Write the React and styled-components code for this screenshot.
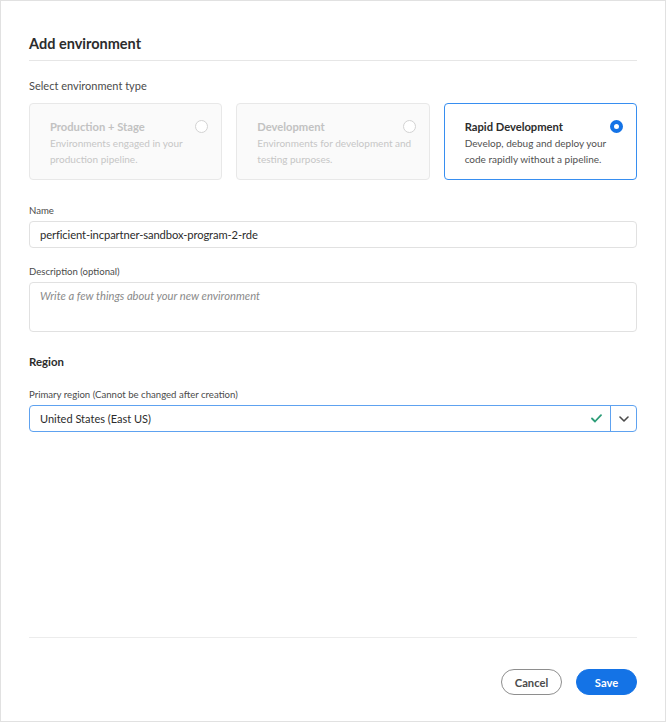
import React from 'react';
import styled, { createGlobalStyle } from 'styled-components';

const GlobalStyle = createGlobalStyle`
  body {
    margin: 0;
    font-family: Lato, "Liberation Sans", sans-serif;
    color: #2c2c2c;
    background: #fff;
  }
  * { box-sizing: border-box; }
`;

const Dialog = styled.div`
  width: 666px;
  height: 722px;
  border: 1px solid #e1e1e1;
  background: #fff;
  padding: 33px 28px 26px 28px;
  display: flex;
  flex-direction: column;
`;

const Heading = styled.h1`
  margin: 0;
  font-size: 14.5px;
  font-weight: 700;
  color: #2c2c2c;
  line-height: 20px;
  padding-bottom: 6px;
  border-bottom: 1px solid #e6e6e6;
`;

const Body = styled.div`
  flex: 1;
  display: flex;
  flex-direction: column;
`;

const GroupLabel = styled.div`
  font-size: 11px;
  color: #4b4b4b;
  margin-top: 17px;
  line-height: 16px;
`;

const Cards = styled.div`
  display: grid;
  grid-template-columns: 1fr 1fr 1fr;
  gap: 14px;
  margin-top: 9px;
`;

const Card = styled.div`
  position: relative;
  height: 77px;
  border-radius: 4px;
  border: 1px solid ${p => (p.$selected ? '#378ef0' : '#e8e8e8')};
  background: ${p => (p.$selected ? '#fff' : '#fafafa')};
  padding: 15px 12px 0 20px;
  display: flex;
  flex-direction: column;
`;

const CardTitle = styled.div`
  font-size: 11.2px;
  font-weight: 700;
  line-height: 16px;
  color: ${p => (p.$selected ? '#2c2c2c' : '#c2c2c2')};
`;

const CardDesc = styled.div`
  font-size: 10px;
  line-height: 16px;
  color: ${p => (p.$selected ? '#505050' : '#c6c6c6')};
  max-width: 158px;
`;

const Radio = styled.span`
  position: absolute;
  top: 16px;
  right: 13px;
  width: 13px;
  height: 13px;
  border-radius: 50%;
  border: ${p => (p.$checked ? '4px solid #1473e6' : '1.5px solid #d3d3d3')};
  background: #fff;
`;

const Field = styled.div`
  display: flex;
  flex-direction: column;
  margin-top: ${p => p.$top || 0}px;
`;

const FieldLabel = styled.label`
  font-size: 9.6px;
  line-height: 14px;
  color: #4b4b4b;
  margin-bottom: 3px;
`;

const TextInput = styled.div`
  height: 27px;
  border: 1px solid #e1e1e1;
  border-radius: 4px;
  padding: 0 10px;
  display: flex;
  align-items: center;
  font-size: 11.2px;
  letter-spacing: -0.1px;
  color: #2c2c2c;
`;

const TextArea = styled.div`
  height: 50px;
  border: 1px solid #e1e1e1;
  border-radius: 4px;
  padding: 5px 10px;
  font-size: 11.2px;
  line-height: 16px;
  font-style: italic;
  color: #8a8a8a;
`;

const SectionTitle = styled.div`
  font-size: 11.4px;
  font-weight: 700;
  color: #2c2c2c;
  margin-top: 22px;
  line-height: 16px;
`;

const Select = styled.div`
  height: 27px;
  border: 1px solid #5ea2f0;
  border-radius: 4px;
  display: flex;
  align-items: stretch;
`;

const SelectValue = styled.div`
  flex: 1;
  display: flex;
  align-items: center;
  justify-content: space-between;
  padding: 0 8px 0 10px;
  font-size: 11px;
  color: #2c2c2c;
  border-right: 1px solid #5ea2f0;
`;

const SelectButton = styled.div`
  width: 25px;
  display: flex;
  align-items: center;
  justify-content: center;
`;

const Footer = styled.div`
  border-top: 1px solid #ececec;
  padding-top: 31px;
  display: flex;
  justify-content: flex-end;
  gap: 14px;
`;

const Button = styled.button`
  height: 26px;
  width: 61px;
  padding: 0;
  border-radius: 13px;
  font-family: inherit;
  font-size: 11.2px;
  font-weight: 700;
  cursor: pointer;
  border: ${p => (p.$primary ? '1.5px solid #1473e6' : '1.5px solid #8e8e8e')};
  background: ${p => (p.$primary ? '#1473e6' : '#fff')};
  color: ${p => (p.$primary ? '#fff' : '#4b4b4b')};
`;

const types = [
  { title: 'Production + Stage', desc: 'Environments engaged in your production pipeline.' },
  { title: 'Development', desc: 'Environments for development and testing purposes.' },
  { title: 'Rapid Development', desc: 'Develop, debug and deploy your code rapidly without a pipeline.', selected: true },
];

const App = () => (
  <>
    <GlobalStyle />
    <Dialog>
      <Heading>Add environment</Heading>
      <Body>
        <GroupLabel>Select environment type</GroupLabel>
        <Cards>
          {types.map(t => (
            <Card key={t.title} $selected={t.selected}>
              <CardTitle $selected={t.selected}>{t.title}</CardTitle>
              <CardDesc $selected={t.selected}>{t.desc}</CardDesc>
              <Radio $checked={t.selected} />
            </Card>
          ))}
        </Cards>

        <Field $top={24}>
          <FieldLabel>Name</FieldLabel>
          <TextInput>perficient-incpartner-sandbox-program-2-rde</TextInput>
        </Field>

        <Field $top={17}>
          <FieldLabel>Description (optional)</FieldLabel>
          <TextArea>Write a few things about your new environment</TextArea>
        </Field>

        <SectionTitle>Region</SectionTitle>

        <Field $top={18}>
          <FieldLabel>Primary region (Cannot be changed after creation)</FieldLabel>
          <Select>
            <SelectValue>
              United States (East US)
              <svg width="11" height="9" viewBox="0 0 11 9">
                <path d="M1 4.5 L4 7.5 L10 1.2" fill="none" stroke="#2d9d78" strokeWidth="1.8" strokeLinecap="round" strokeLinejoin="round" />
              </svg>
            </SelectValue>
            <SelectButton>
              <svg width="10" height="6" viewBox="0 0 10 6">
                <path d="M1 1 L5 5 L9 1" fill="none" stroke="#4b4b4b" strokeWidth="1.6" strokeLinecap="round" strokeLinejoin="round" />
              </svg>
            </SelectButton>
          </Select>
        </Field>
      </Body>
      <Footer>
        <Button>Cancel</Button>
        <Button $primary>Save</Button>
      </Footer>
    </Dialog>
  </>
);

export default App;
